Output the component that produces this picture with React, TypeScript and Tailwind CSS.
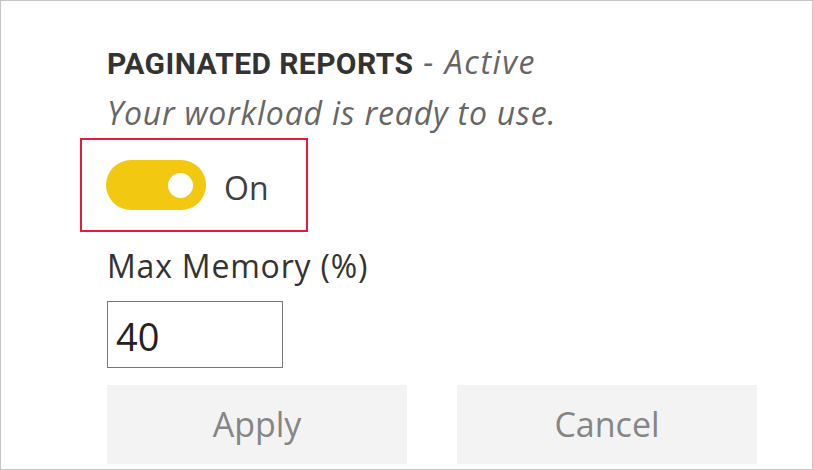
export default function App() {
  return (
    <div className="w-[813px] h-[470px] overflow-hidden bg-white border border-[#c6c6c6] font-['Open_Sans',sans-serif]">
      <div className="flex flex-col pl-[106px]">
        {/* workload header */}
        <div className="mt-[46px] h-[30px] leading-[30px] text-[30px] whitespace-nowrap">
          <span className="font-['Roboto',sans-serif] font-bold text-[30px] tracking-[0.4px] text-[#333333]">PAGINATED REPORTS</span>
          <span className="italic text-[32px] tracking-[1.6px] text-[#666666]"> - Active</span>
        </div>
        <div className="mt-[21px] h-[30px] leading-[30px] text-[32px] tracking-[0.8px] italic text-[#666666] whitespace-nowrap">
          Your workload is ready to use.
        </div>

        {/* toggle, highlighted */}
        <div className="mt-[10px] -ml-[27px] w-[228px] h-[94px] border-2 border-[#e81a3b] flex items-center pl-[24px]">
          <div className="w-[100px] h-[50px] rounded-full bg-[#f2c811] flex items-center justify-end pr-[13px]">
            <div className="w-[25px] h-[25px] rounded-full bg-white" />
          </div>
          <span className="ml-[18px] pt-[5px] text-[32px] leading-[32px] text-[#404040]">On</span>
        </div>

        <div className="mt-[18px] h-[32px] leading-[32px] text-[32px] tracking-[0.8px] text-[#333333] whitespace-nowrap">
          Max Memory (%)
        </div>
        <div className="mt-[19px] w-[176px] h-[67px] border border-[#767676] pl-[8px] pt-[15px] text-[38px] leading-[38px] text-[#222222]">
          40
        </div>

        <div className="mt-[17px] flex gap-[50px]">
          <button className="w-[300px] h-[79px] bg-[#f3f3f3] flex items-center justify-center text-[34px] leading-[35px] text-[#858585]">
            Apply
          </button>
          <button className="w-[300px] h-[79px] bg-[#f3f3f3] flex items-center justify-center text-[34px] leading-[35px] text-[#858585]">
            Cancel
          </button>
        </div>
      </div>
    </div>
  )
}
